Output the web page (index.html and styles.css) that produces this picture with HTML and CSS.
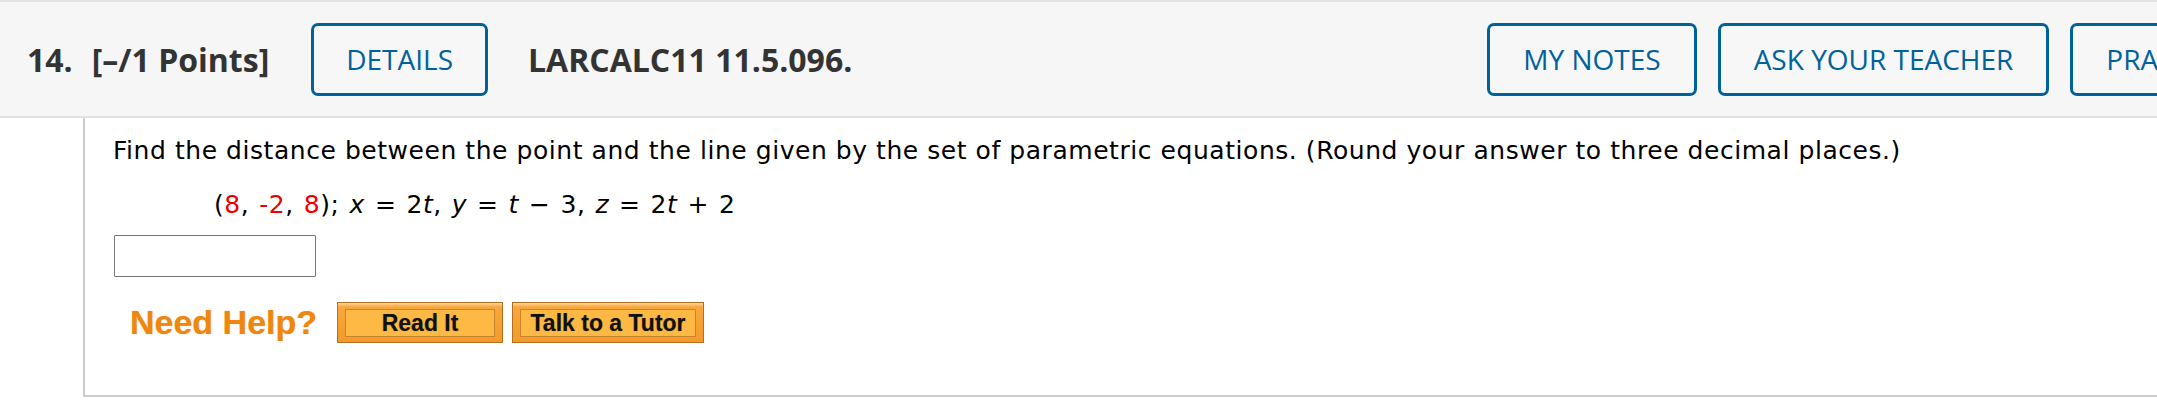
FILE: index.html
```html
<!DOCTYPE html>
<html lang="en">
<head>
<meta charset="utf-8">
<title>Question 14</title>
<link rel="stylesheet" href="styles.css">
</head>
<body>
<div class="page">
  <header class="qhead">
    <span class="qnum">14.</span>
    <span class="qpoints">[–/1 Points]</span>
    <button class="obtn details">DETAILS</button>
    <span class="qid">LARCALC11 11.5.096.</span>
    <div class="actions">
      <button class="obtn">MY NOTES</button>
      <button class="obtn">ASK YOUR TEACHER</button>
      <button class="obtn">PRACTICE ANOTHER</button>
    </div>
  </header>
  <section class="qbody">
    <p class="prompt">Find the distance between the point and the line given by the set of parametric equations. (Round your answer to three decimal places.)</p>
    <p class="math">(<span class="red">8</span>, <span class="red">-2</span>, <span class="red">8</span>); <i>x</i> = 2<i>t</i>, <i>y</i> = <i>t</i> − 3, <i>z</i> = 2<i>t</i> + 2</p>
    <input class="answer" type="text" aria-label="answer">
    <div class="help">
      <span class="need">Need Help?</span>
      <button class="hbtn read"><span class="hin">Read It</span></button>
      <button class="hbtn tutor"><span class="hin">Talk to a Tutor</span></button>
    </div>
  </section>
</div>
</body>
</html>
```

FILE: styles.css
```css
html, body {
  margin: 0;
  padding: 0;
  background: #ffffff;
  overflow: hidden;
}

.page {
  width: 2425px;
}

.qhead {
  display: flex;
  align-items: center;
  height: 114px;
  background: #f6f6f6;
  border-top: 2px solid #e2e2e2;
  border-bottom: 2px solid #e2e2e2;
  padding: 0 20px 0 27px;
  font-family: "Open Sans", "Liberation Sans", sans-serif;
  color: #333333;
}

.qnum,
.qpoints,
.qid {
  font-weight: 700;
  font-size: 32px;
  white-space: nowrap;
}

.qnum {
  margin-right: 19px;
}

.qpoints {
  margin-right: 42px;
}

.qid {
  margin-left: 40px;
}

.obtn {
  height: 73px;
  padding: 0 33px;
  border: 3px solid #00629b;
  border-radius: 7px;
  background: #f7f7f7;
  color: #00629b;
  font-family: "Open Sans", "Liberation Sans", sans-serif;
  font-size: 28px;
  font-weight: 400;
  white-space: nowrap;
}

.obtn.details {
  padding: 0 32px;
}

.actions {
  display: flex;
  gap: 21px;
  margin-left: auto;
}

.qbody {
  margin-left: 83px;
  border-left: 2px solid #cccccc;
  border-bottom: 2px solid #cccccc;
  padding: 18px 0 52px 28px;
  font-family: "DejaVu Sans", Verdana, sans-serif;
  font-size: 25px;
  letter-spacing: 0.55px;
  color: #000000;
}

.prompt {
  margin: 0;
  line-height: 29px;
  white-space: nowrap;
}

.math {
  margin: 25px 0 0 0;
  padding-left: 101px;
  line-height: 29px;
  word-spacing: 1.5px;
  white-space: nowrap;
}

.red {
  color: #ee0000;
}

.answer {
  display: block;
  box-sizing: border-box;
  width: 202px;
  height: 42px;
  margin: 16px 0 0 1px;
  border: 1px solid #777777;
  border-radius: 1px;
  background: #ffffff;
}

.help {
  display: flex;
  align-items: center;
  margin-top: 25px;
  height: 41px;
}

.need {
  margin-left: 17px;
  margin-right: 20px;
  font-family: "Liberation Sans", Arial, sans-serif;
  font-weight: 700;
  font-size: 34px;
  letter-spacing: 0;
  color: #ef860f;
  text-shadow: 0 0 1px rgba(238, 131, 9, 0.6);
}

.hbtn {
  box-sizing: border-box;
  height: 41px;
  padding: 6px 7px 5px 7px;
  margin-right: 9px;
  border: 1px solid #b36f22;
  background: linear-gradient(to bottom, #ffd8a0 0, #f8a73c 4px, #f39a2a 100%);
  display: flex;
  align-items: stretch;
}

.hbtn.read {
  width: 166px;
}

.hbtn.tutor {
  width: 192px;
}

.hin {
  flex: 1;
  display: flex;
  align-items: center;
  justify-content: center;
  border: 1px solid #c6842f;
  background: #fdb944;
  font-family: "Liberation Sans", Arial, sans-serif;
  font-weight: 700;
  font-size: 23px;
  letter-spacing: 0;
  color: #111111;
  text-shadow: 0 0 1px rgba(0, 0, 0, 0.35);
}
```
